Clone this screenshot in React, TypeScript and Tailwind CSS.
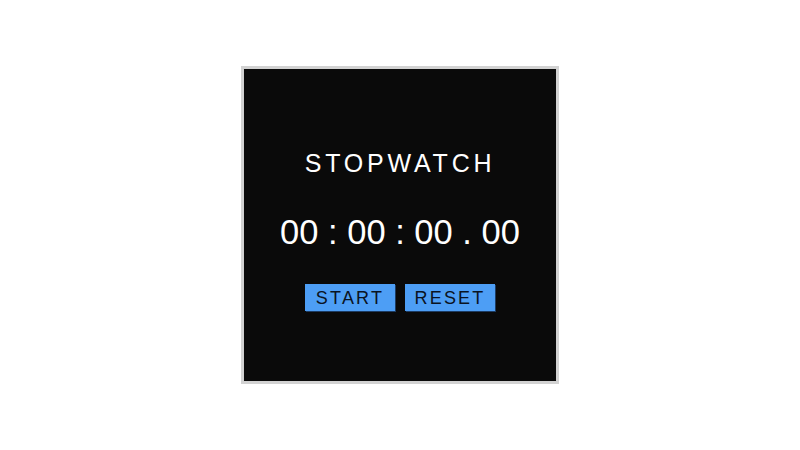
import React, { useEffect, useRef, useState } from 'react';

const pad = (n: number) => String(n).padStart(2, '0');

const formatTime = (ms: number) => {
  const h = Math.floor(ms / 3600000);
  const m = Math.floor((ms % 3600000) / 60000);
  const s = Math.floor((ms % 60000) / 1000);
  const cs = Math.floor((ms % 1000) / 10);
  return `${pad(h)} : ${pad(m)} : ${pad(s)} . ${pad(cs)}`;
};

const App: React.FC = () => {
  const [elapsed, setElapsed] = useState(0);
  const [running, setRunning] = useState(false);
  const startRef = useRef(0);

  useEffect(() => {
    if (!running) return;
    startRef.current = Date.now() - elapsed;
    const id = setInterval(() => setElapsed(Date.now() - startRef.current), 10);
    return () => clearInterval(id);
    // eslint-disable-next-line react-hooks/exhaustive-deps
  }, [running]);

  const handleReset = () => {
    setRunning(false);
    setElapsed(0);
  };

  return (
    <div
      className="w-[800px] h-[450px] bg-white flex items-center justify-center"
      style={{ fontFamily: '"Liberation Sans", Arial, sans-serif' }}
    >
      <div className="w-[318px] h-[318px] border-[3px] border-[#d2d2d2] bg-[#0a0a0a] text-center pt-[80px]">
        <h1 className="text-[25px] leading-[29px] tracking-[3.8px] text-white font-normal">
          STOPWATCH
        </h1>
        <div className="mt-[35px] text-[34.5px] leading-[39px] text-white">
          {formatTime(elapsed)}
        </div>
        <div className="mt-[32px] flex justify-center gap-[10px]">
          <button
            onClick={() => setRunning((r) => !r)}
            className="w-[90px] h-[27px] bg-[#4d9ef5] text-[#0a1322] text-[18px] leading-none tracking-[2.2px] shadow-[1px_1px_0_#1d3c63]"
          >
            {running ? 'STOP' : 'START'}
          </button>
          <button
            onClick={handleReset}
            className="w-[90px] h-[27px] bg-[#4d9ef5] text-[#0a1322] text-[18px] leading-none tracking-[2.2px] shadow-[1px_1px_0_#1d3c63]"
          >
            RESET
          </button>
        </div>
      </div>
    </div>
  );
};

export default App;
